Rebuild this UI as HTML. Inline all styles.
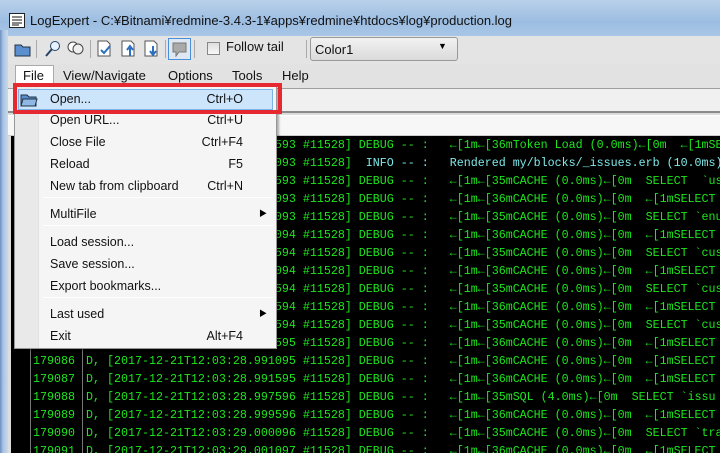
<!DOCTYPE html>
<html><head><meta charset="utf-8"><style>
*{margin:0;padding:0;box-sizing:border-box}
body{width:720px;height:453px;overflow:hidden;position:relative;background:#dcdcdc;font-family:"Liberation Sans","Noto Sans CJK JP",sans-serif}
.abs{position:absolute}
#title{left:0;top:0;width:720px;height:36px;background:linear-gradient(#b9d1ea,#9cbde2 60%,#a9c6e6);}
#title .t{left:30px;top:13px;font-size:13px;color:#111;white-space:nowrap}
#frameL{left:0;top:30px;width:8px;height:423px;background:linear-gradient(90deg,#6e8fbf,#a9c4e4 40%,#c8d8ea)}
#tb{left:8px;top:36px;width:712px;height:28px;background:#e4e4e4}
#mb{left:8px;top:64px;width:712px;height:25px;background:#e2e2e2;border-bottom:1px solid #a0a0a0}
#mb span{position:absolute;top:4px;font-size:13px;color:#111}
#strip{left:8px;top:89px;width:712px;height:24px;background:#f0f0f0;border-bottom:2px solid #8a8a8a}
#hdr{left:8px;top:115px;width:712px;height:21px;background:#f7f7f7;border-top:1px solid #fff;border-bottom:1px solid #ccc}
#log{left:11px;top:136px;width:709px;height:317px;background:#000;font-family:"Liberation Mono",monospace;font-size:11.67px;color:#1ee61e;overflow:hidden}
#log .r{position:absolute;left:75px;height:18px;line-height:18px;white-space:pre}
#log .n{position:absolute;left:22px;height:18px;line-height:18px;white-space:pre}
.vl{position:absolute;top:0;width:1px;height:317px;background:#777}
#menu{left:14px;top:86px;width:263px;height:263px;background:#f5f5f5;border:1px solid #979797;box-shadow:2px 2px 2px rgba(0,0,0,.3)}
#menu .ic{position:absolute;left:0;top:0;width:24px;height:261px;background:#e9e9e9;border-right:1px solid #e2e2e2}
.mi{position:absolute;left:35px;font-size:12.5px;color:#111;white-space:nowrap}
.sc{position:absolute;right:33px;font-size:12.5px;color:#111}
.sep{position:absolute;left:28px;width:230px;height:1px;background:#c8c8c8;border-bottom:1px solid #fff}
</style></head><body>
<div id="title" class="abs">
 <svg class="abs" style="left:9px;top:13px" width="16" height="15"><rect x="0.5" y="0.5" width="15" height="14" fill="#fff" stroke="#222"/><path d="M3 4h10M3 7h10M3 10h10M3 12h7" stroke="#111"/></svg>
 <div class="t abs">LogExpert - C:¥Bitnami¥redmine-3.4.3-1¥apps¥redmine¥htdocs¥log¥production.log</div>
</div>
<div id="frameL" class="abs"></div>
<div id="tb" class="abs">
 <svg class="abs" style="left:6px;top:5px" width="18" height="16"><path d="M1 4h6l2 2h7v9H1z" fill="#5b8fd0" stroke="#234"/></svg>
 <div class="abs" style="left:28px;top:4px;width:1px;height:18px;background:#aaa"></div>
 <svg class="abs" style="left:36px;top:4px" width="18" height="18"><circle cx="11" cy="6" r="4.5" fill="#e8f2ff" stroke="#246"/><path d="M8 9l-6 7" stroke="#246" stroke-width="2"/></svg>
 <svg class="abs" style="left:58px;top:4px" width="20" height="18"><circle cx="7" cy="7" r="5" fill="#fff" stroke="#444"/><circle cx="12" cy="9" r="5" fill="#eee" stroke="#444"/></svg>
 <div class="abs" style="left:82px;top:4px;width:1px;height:18px;background:#aaa"></div>
 <svg class="abs" style="left:88px;top:4px" width="18" height="18"><path d="M2 1h9l3 3v12H2z" fill="#fff" stroke="#555"/><path d="M5 10l3 3 6-7" stroke="#2a6fc0" stroke-width="2" fill="none"/></svg>
 <svg class="abs" style="left:112px;top:4px" width="18" height="18"><path d="M2 1h9l3 3v12H2z" fill="#fff" stroke="#555"/><path d="M10 16V8M7 10l3-4 3 4" stroke="#2a6fc0" stroke-width="2" fill="none"/></svg>
 <svg class="abs" style="left:135px;top:4px" width="18" height="18"><path d="M2 1h9l3 3v12H2z" fill="#fff" stroke="#555"/><path d="M10 6v8M7 11l3 4 3-4" stroke="#2a6fc0" stroke-width="2" fill="none"/></svg>
 <div class="abs" style="left:157px;top:4px;width:1px;height:18px;background:#aaa"></div>
 <div class="abs" style="left:160px;top:2px;width:23px;height:22px;border:1px solid #4a90d9;background:#dfe8f2"></div>
 <svg class="abs" style="left:164px;top:6px" width="16" height="15"><path d="M1 1h13v9H7l-3 4v-4H1z" fill="#aaa" stroke="#777"/></svg>
 <div class="abs" style="left:186px;top:4px;width:1px;height:18px;background:#aaa"></div>
 <div class="abs" style="left:199px;top:6px;width:13px;height:13px;border:1px solid #888;background:linear-gradient(#ddd,#f8f8f8)"></div>
 <div class="abs" style="left:218px;top:3px;font-size:13px;color:#111">Follow tail</div>
 <div class="abs" style="left:298px;top:4px;width:1px;height:18px;background:#aaa"></div>
 <div class="abs" style="left:302px;top:1px;width:148px;height:24px;border:1px solid #999;border-radius:3px;background:linear-gradient(#f2f2f2,#dadada)"><span class="abs" style="left:4px;top:4px;font-size:13px;color:#111">Color1</span><span class="abs" style="left:127px;top:3px;font-size:9px">▼</span></div>
</div>
<div id="mb" class="abs">
 <div class="abs" style="left:7px;top:1px;width:39px;height:24px;background:#fff;border:1px solid #aaa;border-bottom:none"></div>
 <span style="left:15px">File</span><span style="left:55px">View/Navigate</span><span style="left:160px">Options</span><span style="left:224px">Tools</span><span style="left:274px">Help</span>
</div>
<div id="strip" class="abs"></div>
<div id="hdr" class="abs"></div>
<div id="log" class="abs">
<div class="vl" style="left:19px"></div><div class="vl" style="left:71px"></div>
<div class="n" style="top:0">179074</div><div class="r" style="top:0">D, [2017-12-21T12:03:28.987593 #11528] DEBUG -- :   ←[1m←[36mToken Load (0.0ms)←[0m  ←[1mSELECT</div>
<div class="n" style="top:18px">179075</div><div class="r" style="top:18px">I, [2017-12-21T12:03:28.988093 #11528]  <span style="color:#7fe8e8">INFO -- :   Rendered my/blocks/_issues.erb (10.0ms)</span></div>
<div class="n" style="top:36px">179076</div><div class="r" style="top:36px">D, [2017-12-21T12:03:28.988593 #11528] DEBUG -- :   ←[1m←[35mCACHE (0.0ms)←[0m  SELECT  `users`</div>
<div class="n" style="top:54px">179077</div><div class="r" style="top:54px">D, [2017-12-21T12:03:28.989093 #11528] DEBUG -- :   ←[1m←[36mCACHE (0.0ms)←[0m  ←[1mSELECT `</div>
<div class="n" style="top:72px">179078</div><div class="r" style="top:72px">D, [2017-12-21T12:03:28.989093 #11528] DEBUG -- :   ←[1m←[35mCACHE (0.0ms)←[0m  SELECT `enum</div>
<div class="n" style="top:90px">179079</div><div class="r" style="top:90px">D, [2017-12-21T12:03:28.989094 #11528] DEBUG -- :   ←[1m←[36mCACHE (0.0ms)←[0m  ←[1mSELECT</div>
<div class="n" style="top:108px">179080</div><div class="r" style="top:108px">D, [2017-12-21T12:03:28.989594 #11528] DEBUG -- :   ←[1m←[35mCACHE (0.0ms)←[0m  SELECT `cust</div>
<div class="n" style="top:126px">179081</div><div class="r" style="top:126px">D, [2017-12-21T12:03:28.990094 #11528] DEBUG -- :   ←[1m←[36mCACHE (0.0ms)←[0m  ←[1mSELECT</div>
<div class="n" style="top:144px">179082</div><div class="r" style="top:144px">D, [2017-12-21T12:03:28.990594 #11528] DEBUG -- :   ←[1m←[35mCACHE (0.0ms)←[0m  SELECT `cust</div>
<div class="n" style="top:162px">179083</div><div class="r" style="top:162px">D, [2017-12-21T12:03:28.990594 #11528] DEBUG -- :   ←[1m←[36mCACHE (0.0ms)←[0m  ←[1mSELECT</div>
<div class="n" style="top:180px">179084</div><div class="r" style="top:180px">D, [2017-12-21T12:03:28.990594 #11528] DEBUG -- :   ←[1m←[35mCACHE (0.0ms)←[0m  SELECT `cust</div>
<div class="n" style="top:198px">179085</div><div class="r" style="top:198px">D, [2017-12-21T12:03:28.990595 #11528] DEBUG -- :   ←[1m←[36mCACHE (0.0ms)←[0m  ←[1mSELECT</div>
<div class="n" style="top:216px">179086</div><div class="r" style="top:216px">D, [2017-12-21T12:03:28.991095 #11528] DEBUG -- :   ←[1m←[36mCACHE (0.0ms)←[0m  ←[1mSELECT</div>
<div class="n" style="top:234px">179087</div><div class="r" style="top:234px">D, [2017-12-21T12:03:28.991595 #11528] DEBUG -- :   ←[1m←[36mCACHE (0.0ms)←[0m  ←[1mSELECT</div>
<div class="n" style="top:252px">179088</div><div class="r" style="top:252px">D, [2017-12-21T12:03:28.997596 #11528] DEBUG -- :   ←[1m←[35mSQL (4.0ms)←[0m  SELECT `issu</div>
<div class="n" style="top:270px">179089</div><div class="r" style="top:270px">D, [2017-12-21T12:03:28.999596 #11528] DEBUG -- :   ←[1m←[36mCACHE (0.0ms)←[0m  ←[1mSELECT</div>
<div class="n" style="top:288px">179090</div><div class="r" style="top:288px">D, [2017-12-21T12:03:29.000096 #11528] DEBUG -- :   ←[1m←[35mCACHE (0.0ms)←[0m  SELECT `trac</div>
<div class="n" style="top:306px">179091</div><div class="r" style="top:306px">D, [2017-12-21T12:03:29.001097 #11528] DEBUG -- :   ←[1m←[36mCACHE (0.0ms)←[0m  ←[1mSELECT</div>
</div>
<div id="menu" class="abs">
 <div class="ic"></div>
 <div class="abs" style="left:3px;top:2px;width:255px;height:21px;background:#cde5fb;border:1px solid #7db2e8"></div>
 <svg class="abs" style="left:5px;top:5px" width="18" height="15"><path d="M1 3h6l2 2h7v9H1z" fill="#5b8fd0" stroke="#234"/><path d="M3 7h14l-2 7H1z" fill="#8fb8e6" stroke="#234"/></svg>
 <div class="mi" style="top:5px">Open...</div><div class="sc" style="top:5px">Ctrl+O</div>
 <div class="mi" style="top:26px">Open URL...</div><div class="sc" style="top:26px">Ctrl+U</div>
 <div class="mi" style="top:48px">Close File</div><div class="sc" style="top:48px">Ctrl+F4</div>
 <div class="mi" style="top:70px">Reload</div><div class="sc" style="top:70px">F5</div>
 <div class="mi" style="top:92px">New tab from clipboard</div><div class="sc" style="top:92px">Ctrl+N</div>
 <div class="sep" style="top:110px"></div>
 <div class="mi" style="top:120px">MultiFile</div><div class="abs" style="left:244px;top:121px;font-size:8px">▶</div>
 <div class="sep" style="top:138px"></div>
 <div class="mi" style="top:148px">Load session...</div>
 <div class="mi" style="top:170px">Save session...</div>
 <div class="mi" style="top:192px">Export bookmarks...</div>
 <div class="sep" style="top:210px"></div>
 <div class="mi" style="top:220px">Last used</div><div class="abs" style="left:244px;top:221px;font-size:8px">▶</div>
 <div class="mi" style="top:242px">Exit</div><div class="sc" style="top:242px">Alt+F4</div>
</div>
<div class="abs" style="left:13px;top:83px;width:269px;height:31px;border:4px solid #e62830"></div>
</body></html>
